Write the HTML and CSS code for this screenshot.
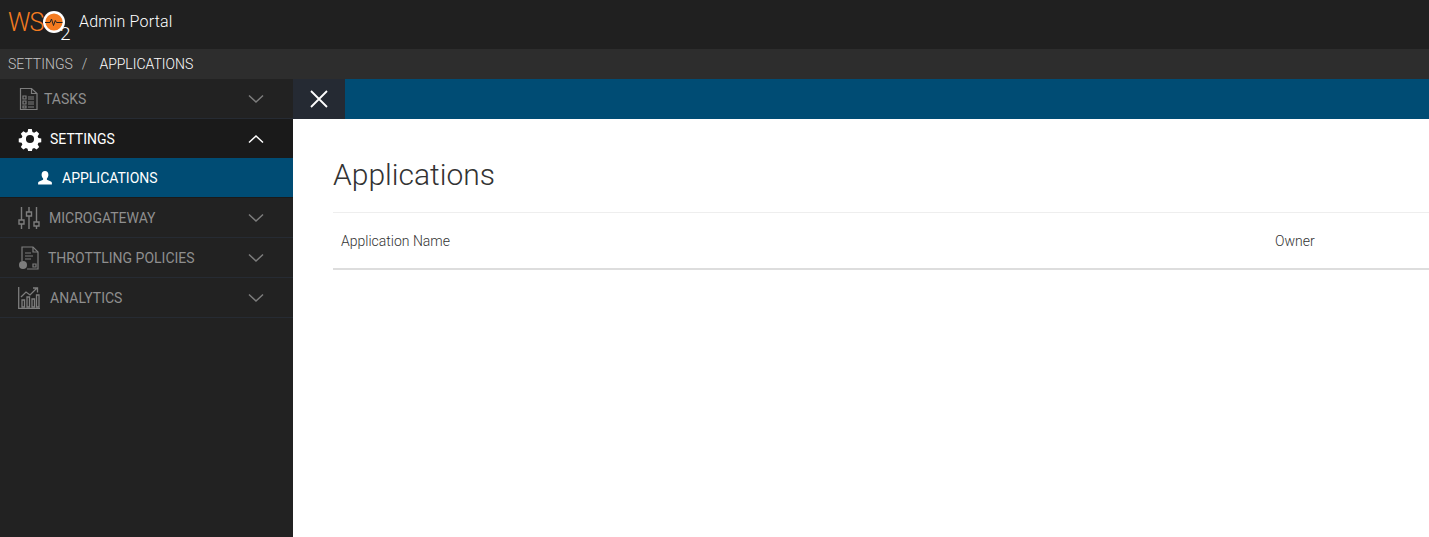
FILE: index.html
```html
<!DOCTYPE html>
<html lang="en">
<head>
    <meta charset="UTF-8">
    <title>WSO2 Admin Portal</title>
    <link rel="stylesheet" href="styles.css">
</head>
<body>
    <header class="header">
        <div class="logo">
            <span class="logo-ws">WS</span>
            <svg class="logo-o" width="24" height="24" viewBox="0 0 24 24">
                <circle cx="12" cy="12" r="11" fill="#fff"/>
                <circle cx="12" cy="12" r="8.6" fill="#f47b20"/>
                <path d="M3 12.5h5l1.5-3.5 2 6.5 1.8-5 1.2 2h6" fill="none" stroke="#222" stroke-width="1"/>
            </svg>
            <span class="logo-two">2</span>
        </div>
        <span class="portal-name">Admin Portal</span>
    </header>
    <nav class="breadcrumb">
        <span class="crumb">SETTINGS</span>
        <span class="crumb-sep">/</span>
        <span class="crumb-current">APPLICATIONS</span>
    </nav>
    <div class="main">
        <aside class="sidebar">
            <div class="nav-item">
                <svg class="nav-icon" width="22" height="24" viewBox="0 0 22 24" fill="none" stroke="#7d7d7d" stroke-width="1.2">
                    <path d="M2.5 1.5h11l5.5 5v16h-16.500z"/>
                    <path d="M13.500 1.500v5h5.500"/>
                    <path d="M5 9h3v3h-3zM5 14h3v3h-3zM5 19h3v2h-3zM10 10h6M10 12h6M10 15h6M10 17h6M10 20h6"/>
                </svg>
                <span class="nav-label">TASKS</span>
                <svg class="chevron" width="16" height="10" viewBox="0 0 16 10"><path d="M1 1.500l7 6.500 7-6.500" fill="none" stroke="#7d7d7d" stroke-width="1.500"/></svg>
            </div>
            <div class="nav-item active">
                <svg class="nav-icon" width="24" height="24" viewBox="0 0 24 24">
                    <path fill="#fff" fill-rule="evenodd" d="M10 1h4l.7 3.200 1.900.8 2.800-1.700 2.800 2.800-1.700 2.800.8 1.900 3.200.7v4l-3.200.7-.8 1.900 1.700 2.800-2.800 2.800-2.800-1.700-1.900.8-.7 3.200h-4l-.7-3.200-1.900-.8-2.800 1.700-2.800-2.800 1.700-2.800-.8-1.900-3.200-.7v-4l3.200-.7.8-1.900-1.700-2.800 2.800-2.800 2.800 1.700 1.900-.8zM12 7.500a4.500 4.500 0 1 0 0 9 4.500 4.500 0 0 0 0-9z" transform="translate(1.200 1.200) scale(.9)"/>
                </svg>
                <span class="nav-label">SETTINGS</span>
                <svg class="chevron" width="16" height="10" viewBox="0 0 16 10"><path d="M1 8.500l7-6.500 7 6.500" fill="none" stroke="#fff" stroke-width="1.500"/></svg>
            </div>
            <div class="sub-item">
                <svg width="14" height="14" viewBox="0 0 14 14"><path fill="#fff" d="M7 0c2.200 0 3.400 1.600 3.400 3.800 0 1.500-.6 2.800-1.500 3.700v1.200l4 1.900c.6.300 1 .8 1 1.400v1.500h-13.800v-1.500c0-.6.400-1.100 1-1.400l4-1.900v-1.200c-.9-.9-1.500-2.200-1.500-3.700 0-2.200 1.200-3.800 3.400-3.800z"/></svg>
                <span>APPLICATIONS</span>
            </div>
            <div class="nav-item">
                <svg class="nav-icon" width="22" height="24" viewBox="0 0 22 24" fill="none" stroke="#7d7d7d" stroke-width="1.400">
                    <path d="M3.500 1v13M3.500 18v5M11 1v5M11 10v13M18.500 1v15M18.500 20v3"/>
                    <path d="M1 14h5v4h-5zM8.500 6h5v4h-5zM16 16h5v4h-5z"/>
                </svg>
                <span class="nav-label label-micro">MICROGATEWAY</span>
                <svg class="chevron" width="16" height="10" viewBox="0 0 16 10"><path d="M1 1.500l7 6.500 7-6.500" fill="none" stroke="#7d7d7d" stroke-width="1.500"/></svg>
            </div>
            <div class="nav-item">
                <svg class="nav-icon" width="22" height="24" viewBox="0 0 22 24" fill="none" stroke="#7d7d7d" stroke-width="1.200">
                    <path d="M4 15v-14h11l5 5v17h-11"/>
                    <path d="M15 1v5h5"/>
                    <path d="M7 7h6M7 10h8M7 13h6M15 18h3v3h-3z"/>
                    <circle cx="5" cy="19" r="4" fill="#7d7d7d" stroke="none"/>
                </svg>
                <span class="nav-label label-throttle">THROTTLING POLICIES</span>
                <svg class="chevron" width="16" height="10" viewBox="0 0 16 10"><path d="M1 1.500l7 6.500 7-6.500" fill="none" stroke="#7d7d7d" stroke-width="1.500"/></svg>
            </div>
            <div class="nav-item">
                <svg class="nav-icon" width="22" height="22" viewBox="0 0 22 22" fill="none" stroke="#7d7d7d" stroke-width="1.300">
                    <path d="M.7 0v21.300h21.300"/>
                    <path d="M3 10l5-5 4 3 7-7M15 1h4.500v4.500"/>
                    <path d="M4 13h2.500v7h-2.500zM9 10h2.500v10h-2.500zM14 12h2.500v8h-2.500zM18.500 8h2.500v12h-2.500z"/>
                </svg>
                <span class="nav-label">ANALYTICS</span>
                <svg class="chevron" width="16" height="10" viewBox="0 0 16 10"><path d="M1 1.500l7 6.500 7-6.500" fill="none" stroke="#7d7d7d" stroke-width="1.500"/></svg>
            </div>
        </aside>
        <div class="content">
            <div class="topbar">
                <div class="close-btn">
                    <svg width="20" height="20" viewBox="0 0 20 20"><path d="M2 2l16 16M18 2l-16 16" stroke="#fff" stroke-width="1.800"/></svg>
                </div>
            </div>
            <section class="page">
                <h1 class="page-title">Applications</h1>
                <div class="table-head">
                    <span class="col-name">Application Name</span>
                    <span class="col-owner">Owner</span>
                </div>
            </section>
        </div>
    </div>
</body>
</html>
```

FILE: styles.css
```css
* {
    box-sizing: border-box;
}
html, body {
    height: 100%;
}
body {
    margin: 0;
    display: flex;
    flex-direction: column;
    overflow: hidden;
    font-family: Roboto, "Liberation Sans", sans-serif;
    background-color: #fff;
}
.header {
    height: 49px;
    flex: none;
    display: flex;
    align-items: center;
    padding-left: 8px;
    background-color: #202020;
}
.logo {
    display: flex;
    align-items: center;
    width: 71px;
    height: 40px;
    position: relative;
}
.logo-ws {
    font-size: 25px;
    font-weight: 300;
    letter-spacing: -1px;
    color: #f47b20;
    margin-top: -5px;
}
.logo-o {
    margin-left: -1px;
    margin-top: -6px;
}
.logo-two {
    position: absolute;
    left: 52px;
    top: 17px;
    font-size: 19px;
    font-weight: 300;
    color: #fff;
}
.portal-name {
    margin-left: 0;
    margin-top: -6px;
    font-size: 16px;
    color: #fff;
    font-weight: 300;
    letter-spacing: .2px;
}
.breadcrumb {
    height: 30px;
    flex: none;
    display: flex;
    align-items: center;
    padding-left: 8px;
    font-size: 14px;
    font-weight: 300;
    background-color: #2d2d2d;
}
.crumb {
    color: #c4c4c4;
}
.crumb-sep {
    margin: 0 12px 0 9px;
    color: #c4c4c4;
}
.crumb-current {
    color: #fff;
}
.main {
    flex: 1;
    display: flex;
    min-height: 0;
}
.sidebar {
    width: 293px;
    flex: none;
    background-color: #222;
}
.nav-item {
    height: 40px;
    display: flex;
    align-items: center;
    padding: 0 29px 0 18px;
    border-bottom: 1px solid #262b33;
}
.nav-item.active {
    height: 39px;
    background-color: #1a1a1a;
    border-bottom: 0;
}
.nav-icon {
    flex: none;
}
.nav-label {
    flex: 1;
    margin-left: 4px;
    font-size: 14px;
    color: #8f8f8f;
}
.nav-item.active .nav-label {
    margin-left: 8px;
    color: #fff;
}
.label-micro {
    margin-left: 9px;
}
.label-throttle {
    margin-left: 8px;
}
.nav-item:last-child .nav-label {
    margin-left: 10px;
}
.sub-item {
    height: 40px;
    display: flex;
    align-items: center;
    gap: 10px;
    padding-left: 38px;
    font-size: 14px;
    color: #fff;
    background-color: #004c74;
    border-bottom: 1px solid #1a1a1a;
}
.content {
    flex: 1;
    min-width: 0;
}
.topbar {
    height: 40px;
    background-color: #004c74;
}
.close-btn {
    width: 52px;
    height: 40px;
    display: flex;
    align-items: center;
    justify-content: center;
    background-color: #252a33;
}
.page {
    padding: 36px 0 0 40px;
}
.page-title {
    margin: 0;
    padding-bottom: 17px;
    font-size: 30px;
    line-height: 40px;
    font-weight: 300;
    color: #333;
    border-bottom: 1px solid #eee;
}
.table-head {
    height: 57px;
    display: flex;
    align-items: center;
    padding-left: 8px;
    font-size: 14px;
    font-weight: 300;
    color: #333;
    border-bottom: 2px solid #ddd;
}
.col-name {
    width: 934px;
}
```
